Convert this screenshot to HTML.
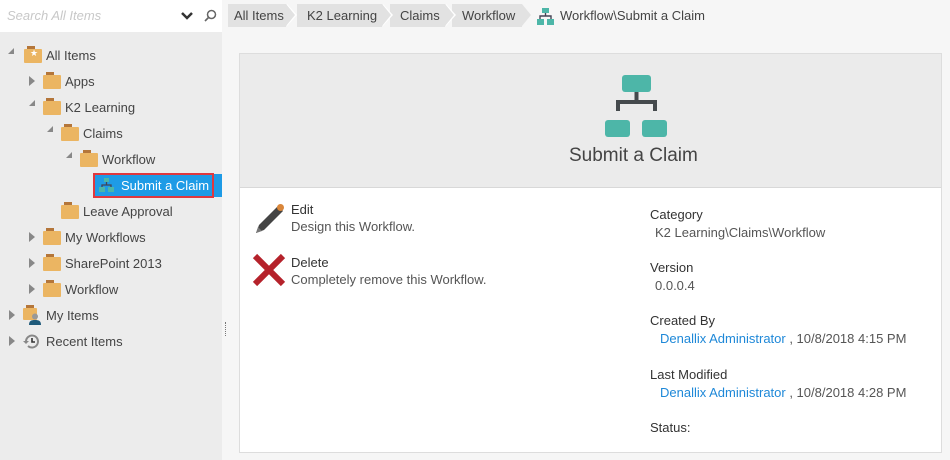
<!DOCTYPE html>
<html><head><style>
*{margin:0;padding:0;box-sizing:border-box}
body{width:950px;height:460px;background:#f6f6f6;font-family:"Liberation Sans",sans-serif;font-size:13px;color:#444;position:relative;overflow:hidden}
.a{position:absolute;white-space:nowrap}
#side{position:absolute;left:0;top:0;width:222px;height:460px;background:#ececec}
#search{position:absolute;left:0;top:0;width:222px;height:32px;background:#fff}
.t{position:absolute;line-height:16px;font-size:13px;color:#444;margin-top:1px}
.fold{position:absolute;width:18px;height:14px;background:#ebb562;border-radius:1px}
.fold:before{content:"";position:absolute;left:3px;top:-3px;width:8px;height:3px;background:#b4763a}
.ar{position:absolute;width:0;height:0}
.ar.r{border-left:6px solid #888;border-top:5px solid transparent;border-bottom:5px solid transparent}
.ar.d{border-right:6px solid #888;border-top:6px solid transparent}
.bc{position:absolute;top:4px;height:23px;background:#e2e2e2;line-height:23px;padding-left:6px;font-size:13px;color:#444}
.chevw{position:absolute;top:4px;width:0;height:0;border-left:10px solid #fff;border-top:11.5px solid transparent;border-bottom:11.5px solid transparent}
.chev{position:absolute;top:4px;width:0;height:0;border-left:9px solid #e2e2e2;border-top:11.5px solid transparent;border-bottom:11.5px solid transparent}
#panel{position:absolute;left:239px;top:53px;width:703px;height:400px;background:#fff;border:1px solid #ddd}
#head{position:absolute;left:0;top:0;width:701px;height:134px;background:#ebebeb;border-bottom:1px solid #d8d8d8}
.lbl{position:absolute;font-size:13px;color:#333}
.val{position:absolute;font-size:13px;color:#555}
.lnk{color:#1e88d8}
</style></head><body>
<div id="side">
 <div id="search"><span class="a" style="left:7px;top:8px;font-style:italic;color:#c8c8c8;font-size:13px">Search All Items</span>
  <svg class="a" style="left:180px;top:11px" width="14" height="10" viewBox="0 0 14 10"><path d="M2 2l5 5 5-5" stroke="#333" stroke-width="2.5" fill="none"/></svg>
  <svg class="a" style="left:204px;top:9px" width="13" height="13" viewBox="0 0 13 13"><circle cx="7.5" cy="5.5" r="4" stroke="#666" stroke-width="1.5" fill="none"/><path d="M4.5 8.5L1 12" stroke="#666" stroke-width="1.6"/></svg>
 </div>
 <div class="ar d" style="left:8px;top:48px"></div>
 <div class="fold" style="left:24px;top:49px"></div><span class="a" style="left:30px;top:48px;color:#fff;font-size:9px">★</span>
 <span class="t" style="left:46px;top:47px">All Items</span>
 <div class="ar r" style="left:29px;top:76px"></div>
 <div class="fold" style="left:43px;top:75px"></div><span class="t" style="left:65px;top:73px">Apps</span>
 <div class="ar d" style="left:29px;top:100px"></div>
 <div class="fold" style="left:43px;top:101px"></div><span class="t" style="left:65px;top:99px">K2 Learning</span>
 <div class="ar d" style="left:47px;top:126px"></div>
 <div class="fold" style="left:61px;top:127px"></div><span class="t" style="left:83px;top:125px">Claims</span>
 <div class="ar d" style="left:66px;top:152px"></div>
 <div class="fold" style="left:80px;top:153px"></div><span class="t" style="left:102px;top:151px">Workflow</span>
 <div class="a" style="left:94px;top:174px;width:128px;height:23px;background:#1e9be6"></div>
 <div class="a" style="left:93px;top:173px;width:121px;height:25px;border:2px solid #e0383e"></div>
 <svg class="a" style="left:99px;top:178px" width="15" height="15" viewBox="0 0 15 15"><rect x="5" y="0" width="5" height="4" fill="#4db6a8"/><path d="M7.5 4v3M3 9V7h9v2" stroke="#445" stroke-width="1.3" fill="none"/><rect x="0" y="9" width="6" height="5" fill="#4db6a8"/><rect x="9" y="9" width="6" height="5" fill="#4db6a8"/></svg>
 <span class="t" style="left:121px;top:177px;color:#fff">Submit a Claim</span>
 <div class="fold" style="left:61px;top:205px"></div><span class="t" style="left:83px;top:203px">Leave Approval</span>
 <div class="ar r" style="left:29px;top:232px"></div>
 <div class="fold" style="left:43px;top:231px"></div><span class="t" style="left:65px;top:229px">My Workflows</span>
 <div class="ar r" style="left:29px;top:258px"></div>
 <div class="fold" style="left:43px;top:257px"></div><span class="t" style="left:65px;top:255px">SharePoint 2013</span>
 <div class="ar r" style="left:29px;top:284px"></div>
 <div class="fold" style="left:43px;top:283px"></div><span class="t" style="left:65px;top:281px">Workflow</span>
 <div class="ar r" style="left:9px;top:310px"></div>
 <div class="fold" style="left:23px;top:308px;width:14px;height:12px"></div>
 <svg class="a" style="left:29px;top:313px" width="12" height="12" viewBox="0 0 12 12"><circle cx="6" cy="3.5" r="3" fill="#999"/><path d="M0 12c0-4 2-5 6-5s6 1 6 5z" fill="#1f5a7a"/></svg>
 <span class="t" style="left:46px;top:307px">My Items</span>
 <div class="ar r" style="left:9px;top:336px"></div>
 <svg class="a" style="left:23px;top:333px" width="17" height="17" viewBox="0 0 17 17"><path d="M3 8.5a6 6 0 1 1 2 4.5" stroke="#888" stroke-width="2" fill="none"/><path d="M0 8l3 3 3-3z" fill="#888"/><path d="M9 5v4h3" stroke="#333" stroke-width="1.6" fill="none"/></svg>
 <span class="t" style="left:46px;top:333px">Recent Items</span>
</div>
<div class="a" style="left:225px;top:322px;width:1px;height:14px;border-left:1px dotted #777"></div>
<div class="bc" style="left:228px;width:58px">All Items</div>
<div class="bc" style="left:297px;width:85px;padding-left:10px">K2 Learning</div>
<div class="bc" style="left:390px;width:55px;padding-left:10px">Claims</div>
<div class="bc" style="left:452px;width:70px;padding-left:10px">Workflow</div>
<div class="chevw" style="left:287px"></div><div class="chev" style="left:286px"></div>
<div class="chevw" style="left:383px"></div><div class="chev" style="left:382px"></div>
<div class="chevw" style="left:446px"></div><div class="chev" style="left:445px"></div>
<div class="chev" style="left:522px"></div>
<svg class="a" style="left:537px;top:8px" width="17" height="17" viewBox="0 0 17 17"><rect x="5" y="0" width="7" height="5" fill="#4db6a8"/><path d="M8.5 5v3M3 11V8h11v3" stroke="#445" stroke-width="1.4" fill="none"/><rect x="0" y="11" width="7" height="6" fill="#4db6a8"/><rect x="10" y="11" width="7" height="6" fill="#4db6a8"/></svg>
<span class="a" style="left:560px;top:8px;font-size:13px;color:#444">Workflow\Submit a Claim</span>
<div id="panel">
 <div id="head">
  <svg class="a" style="left:365px;top:20px" width="64" height="64" viewBox="0 0 64 64"><rect x="17" y="1" width="29" height="17" rx="3" fill="#4db6a8"/><path d="M31.5 18v8M13 37V28h37v9" stroke="#454a4d" stroke-width="4" fill="none"/><rect x="0" y="46" width="25" height="17" rx="3" fill="#4db6a8"/><rect x="37" y="46" width="25" height="17" rx="3" fill="#4db6a8"/></svg>
  <span class="a" style="left:329px;top:91px;font-size:19px;color:#444">Submit a Claim</span>
 </div>
 <svg class="a" style="left:13px;top:148px" width="34" height="34" viewBox="0 0 34 34"><path d="M25 4l5 5-19 19-8 3 3-8z" fill="#444"/><circle cx="27.5" cy="5.5" r="3.5" fill="#d9863a"/><path d="M3 31l2-6 4 4z" fill="#777"/></svg>
 <span class="lbl" style="left:51px;top:148px">Edit</span>
 <span class="val" style="left:51px;top:165px">Design this Workflow.</span>
 <svg class="a" style="left:12px;top:199px" width="34" height="34" viewBox="0 0 34 34"><path d="M3 3L31 31M31 3L3 31" stroke="#b5222b" stroke-width="6"/></svg>
 <span class="lbl" style="left:51px;top:201px">Delete</span>
 <span class="val" style="left:51px;top:218px">Completely remove this Workflow.</span>
 <span class="lbl" style="left:410px;top:153px">Category</span>
 <span class="val" style="left:415px;top:171px">K2 Learning\Claims\Workflow</span>
 <span class="lbl" style="left:410px;top:206px">Version</span>
 <span class="val" style="left:415px;top:224px">0.0.0.4</span>
 <span class="lbl" style="left:410px;top:259px">Created By</span>
 <span class="val" style="left:420px;top:277px"><span class="lnk">Denallix Administrator</span> , 10/8/2018 4:15 PM</span>
 <span class="lbl" style="left:410px;top:313px">Last Modified</span>
 <span class="val" style="left:420px;top:331px"><span class="lnk">Denallix Administrator</span> , 10/8/2018 4:28 PM</span>
 <span class="lbl" style="left:410px;top:366px">Status:</span>
</div>
</body></html>
